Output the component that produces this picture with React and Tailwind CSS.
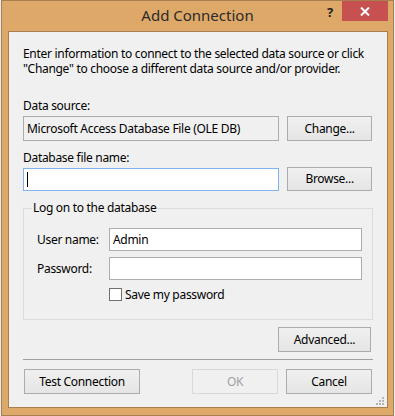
import React from "react";

const FONT = "font-['Segoe_UI','Noto_Sans',sans-serif]";

function Button({ children, disabled, className = "" }) {
  return (
    <button
      type="button"
      disabled={disabled}
      className={`flex items-center justify-center border text-[12px] leading-none ${
        disabled
          ? "border-[#d9d9d9] bg-[#f0f0f0] text-[#a0a0a0]"
          : "border-[#acacac] bg-gradient-to-b from-[#f0f0f0] to-[#e5e5e5] text-[#000]"
      } ${className}`}
    >
      {children}
    </button>
  );
}

export default function App() {
  return (
    <div className={`w-[395px] h-[416px] bg-[#e8ecf0] pl-[1px] tracking-[-0.3px] ${FONT}`}>
      <div className="w-[393px] h-[416px] border border-[#a8804f] bg-[#dea869] flex flex-col">
        {/* title bar */}
        <div className="relative h-[30px] shrink-0 flex items-center justify-center">
          <span className="text-[15px] text-[#2b2b2b] leading-none -mt-[2px] tracking-normal">Add Connection</span>
          <span className="absolute left-[325px] top-[5px] text-[13px] font-bold text-[#222] leading-none">?</span>
          <div className="absolute left-[340px] top-0 w-[46px] h-[20px] bg-[#c75050] flex items-center justify-center">
            <svg width="10" height="9" viewBox="0 0 10 9">
              <path d="M1 0.5 L9 8.5 M9 0.5 L1 8.5" stroke="#fff" strokeWidth="2" />
            </svg>
          </div>
        </div>

        {/* client area */}
        <div className="ml-[6px] w-[380px] h-[377px] border border-[#a8804f] bg-[#f0f0f0] pl-[14px] pr-[15px] flex flex-col text-[12px] text-[#000] relative">
          <p className="mt-[14px] leading-[15px] whitespace-nowrap">
            Enter information to connect to the selected data source or click
            <br />
            "Change" to choose a different data source and/or provider.
          </p>

          <div className="mt-[22px] leading-[15px]">Data source:</div>
          <div className="mt-[3px] flex gap-[8px]">
            <div className="w-[257px] h-[25px] border border-[#abadb3] bg-[#f0f0f0] flex items-center pl-[3px] whitespace-nowrap">
              Microsoft Access Database File (OLE DB)
            </div>
            <Button className="w-[85px] h-[25px]">Change...</Button>
          </div>

          <div className="mt-[9px] leading-[15px]">Database file name:</div>
          <div className="mt-[2px] flex gap-[8px] items-center">
            <div className="w-[257px] h-[23px] border border-[#7eb4ea] bg-white flex items-center pl-[3px]">
              <span className="w-[1px] h-[15px] bg-black" />
            </div>
            <Button className="w-[85px] h-[24px]">Browse...</Button>
          </div>

          {/* group box */}
          <div className="mt-[17px] relative w-[350px] h-[112px] border border-[#dcdcdc] pl-[13px]">
            <span className="absolute left-[8px] -top-[9px] px-[1px] bg-[#f0f0f0] leading-[15px]">
              Log on to the database
            </span>
            <div className="mt-[19px] flex items-center">
              <span className="w-[72px]">User name:</span>
              <div className="w-[253px] h-[23px] border border-[#abadb3] bg-white flex items-center pl-[3px]">
                Admin
              </div>
            </div>
            <div className="mt-[6px] flex items-center">
              <span className="w-[72px]">Password:</span>
              <div className="w-[253px] h-[23px] border border-[#abadb3] bg-white" />
            </div>
            <label className="mt-[7px] ml-[72px] flex items-center gap-[3px]">
              <span className="w-[13px] h-[13px] border border-[#707070] bg-white" />
              <span className="leading-[15px]">Save my password</span>
            </label>
          </div>

          <div className="mt-[7px] flex justify-end pr-[1px]">
            <Button className="w-[93px] h-[25px]">Advanced...</Button>
          </div>

          <div className="mt-[7px] w-[350px] h-[1px] bg-[#a0a0a0]" />

          <div className="mt-[9px] flex items-center">
            <Button className="ml-[1px] w-[116px] h-[25px]">Test Connection</Button>
            <Button disabled className="ml-[52px] w-[86px] h-[25px]">OK</Button>
            <Button className="ml-[8px] w-[86px] h-[25px]">Cancel</Button>
          </div>

          {/* size grip */}
          <svg className="absolute right-[2px] bottom-[1px]" width="9" height="9" viewBox="0 0 9 9">
            <g fill="#b5b5b5">
              <rect x="6" y="0" width="2" height="2" />
              <rect x="3" y="3" width="2" height="2" />
              <rect x="6" y="3" width="2" height="2" />
              <rect x="0" y="6" width="2" height="2" />
              <rect x="3" y="6" width="2" height="2" />
              <rect x="6" y="6" width="2" height="2" />
            </g>
          </svg>
        </div>
      </div>
    </div>
  );
}
